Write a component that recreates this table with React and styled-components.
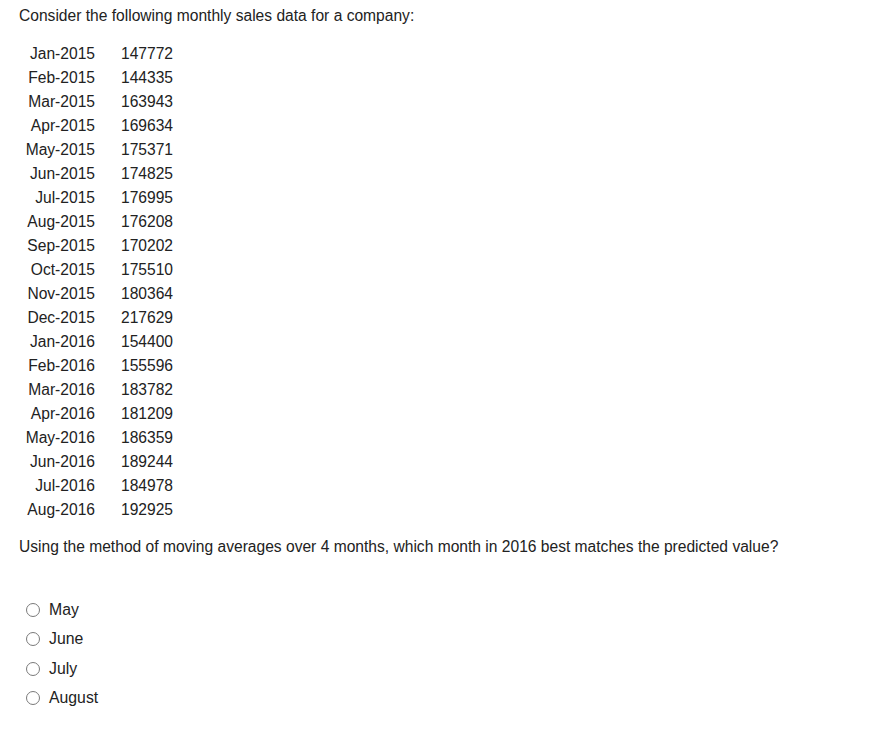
import React from "react";
import styled, { createGlobalStyle } from "styled-components";

const Global = createGlobalStyle`
  body { margin: 0; background: #fff; font-family: "Liberation Sans", Arial, sans-serif; color: #222; }
`;

const Page = styled.div`
  padding: 6px 0 0 19px;
  font-size: 15.6px;
`;

const Intro = styled.p`
  margin: 0;
  line-height: 19px;
`;

const DataTable = styled.div`
  display: grid;
  grid-template-columns: 76px auto;
  column-gap: 26px;
  margin: 17px 0 0 0;
  width: max-content;
`;

const Month = styled.span`
  text-align: right;
  line-height: 24px;
`;

const Value = styled.span`
  line-height: 24px;
`;

const Question = styled.p`
  margin: 15px 0 0 0;
  line-height: 19px;
`;

const Options = styled.div`
  display: flex;
  flex-direction: column;
  margin-top: 39px;
  padding-left: 7px;
`;

const Option = styled.label`
  display: flex;
  align-items: center;
  gap: 9px;
  height: 29.5px;
  font-size: 15.8px;
`;

const Radio = styled.span`
  width: 14px;
  height: 14px;
  border: 1.3px solid #7a7a7a;
  border-radius: 50%;
  box-sizing: border-box;
`;

const data = [
  ["Jan-2015", "147772"], ["Feb-2015", "144335"], ["Mar-2015", "163943"],
  ["Apr-2015", "169634"], ["May-2015", "175371"], ["Jun-2015", "174825"],
  ["Jul-2015", "176995"], ["Aug-2015", "176208"], ["Sep-2015", "170202"],
  ["Oct-2015", "175510"], ["Nov-2015", "180364"], ["Dec-2015", "217629"],
  ["Jan-2016", "154400"], ["Feb-2016", "155596"], ["Mar-2016", "183782"],
  ["Apr-2016", "181209"], ["May-2016", "186359"], ["Jun-2016", "189244"],
  ["Jul-2016", "184978"], ["Aug-2016", "192925"],
];

export default function App() {
  return (
    <>
      <Global />
      <Page>
        <Intro>Consider the following monthly sales data for a company:</Intro>
        <DataTable>
          {data.map(([m, v]) => (
            <React.Fragment key={m}>
              <Month>{m}</Month>
              <Value>{v}</Value>
            </React.Fragment>
          ))}
        </DataTable>
        <Question>Using the method of moving averages over 4 months, which month in 2016 best matches the predicted value?</Question>
        <Options>
          {["May", "June", "July", "August"].map((o) => (
            <Option key={o}><Radio />{o}</Option>
          ))}
        </Options>
      </Page>
    </>
  );
}
